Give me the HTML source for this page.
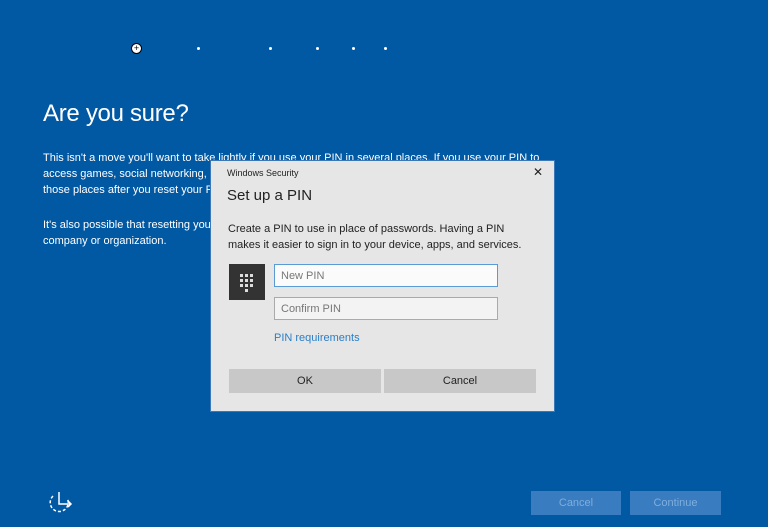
<!DOCTYPE html>
<html><head><style>
body{margin:0;width:768px;height:527px;background:#0158a3;position:relative;overflow:hidden;font-family:"Liberation Sans",sans-serif;color:#fff}
.a{position:absolute}
.dot{position:absolute;width:3px;height:3px;background:#fff;border-radius:50%;top:47px}
.p{font-size:11px;line-height:16px;white-space:nowrap}
#dlg{position:absolute;left:210px;top:160px;width:343px;height:250px;background:#e6e6e6;border:1px solid #3a78b8;color:#222}
.inp{position:absolute;left:63px;width:224px;height:23px;border:1px solid #aaa;background:#f3f3f3;font-size:11px;color:#777;line-height:23px;padding-left:6px;box-sizing:border-box}
.btn{position:absolute;top:208px;height:24px;background:#c8c8c8;font-size:11px;text-align:center;line-height:24px;color:#222}
.bb{position:absolute;top:491px;height:24px;background:#3a7cc0;color:#7eaede;font-size:11px;text-align:center;line-height:24px}
</style></head><body>
<div class="a" style="left:131px;top:43px;width:9px;height:9px;border:1px solid #000;border-radius:50%;background:#fff;font-size:9px;color:#000;line-height:9px;text-align:center">+</div>
<div class="dot" style="left:197px"></div><div class="dot" style="left:269px"></div><div class="dot" style="left:316px"></div><div class="dot" style="left:352px"></div><div class="dot" style="left:384px"></div>
<div class="a" style="left:43px;top:100px;font-size:24px;letter-spacing:-0.3px">Are you sure?</div>
<div class="a p" style="left:43px;top:150px">This isn't a move you'll want to take lightly if you use your PIN in several places. If you use your PIN to<br>access games, social networking, or<br>those places after you reset your PIN.</div>
<div class="a p" style="left:43px;top:217px">It's also possible that resetting your<br>company or organization.</div>
<div id="dlg">
<div class="a" style="left:16px;top:7px;font-size:9px">Windows Security</div>
<div class="a" style="right:11px;top:4px;font-size:12px">✕</div>
<div class="a" style="left:16px;top:26px;font-size:15px">Set up a PIN</div>
<div class="a" style="left:17px;top:60px;font-size:11px;line-height:16px">Create a PIN to use in place of passwords. Having a PIN<br>makes it easier to sign in to your device, apps, and services.</div>
<div class="a" style="left:18px;top:103px;width:36px;height:36px;background:#333">
<svg width="36" height="36" fill="#ddd"><rect x="11" y="10" width="3" height="3"/><rect x="16" y="10" width="3" height="3"/><rect x="21" y="10" width="3" height="3"/><rect x="11" y="15" width="3" height="3"/><rect x="16" y="15" width="3" height="3"/><rect x="21" y="15" width="3" height="3"/><rect x="11" y="20" width="3" height="3"/><rect x="16" y="20" width="3" height="3"/><rect x="21" y="20" width="3" height="3"/><rect x="16" y="25" width="3" height="3"/></svg></div>
<div class="inp" style="top:103px;border-color:#5a9bd5;background:#fbfbfb">New PIN</div>
<div class="inp" style="top:136px">Confirm PIN</div>
<div class="a" style="left:63px;top:171px;font-size:11px;color:#2a7fc8">PIN requirements</div>
<div class="btn" style="left:18px;width:152px">OK</div>
<div class="btn" style="left:173px;width:152px">Cancel</div>
</div>
<svg class="a" style="left:47px;top:490px" width="28" height="26" fill="none" stroke="#fff" stroke-width="1.5"><path d="M6 6 A9 9 0 1 0 20 8" stroke-dasharray="3 2"/><path d="M12 2 V14 H24 M21 11 L24 14 L21 17"/></svg>
<div class="bb" style="left:531px;width:90px">Cancel</div>
<div class="bb" style="left:630px;width:91px">Continue</div>
</body></html>
